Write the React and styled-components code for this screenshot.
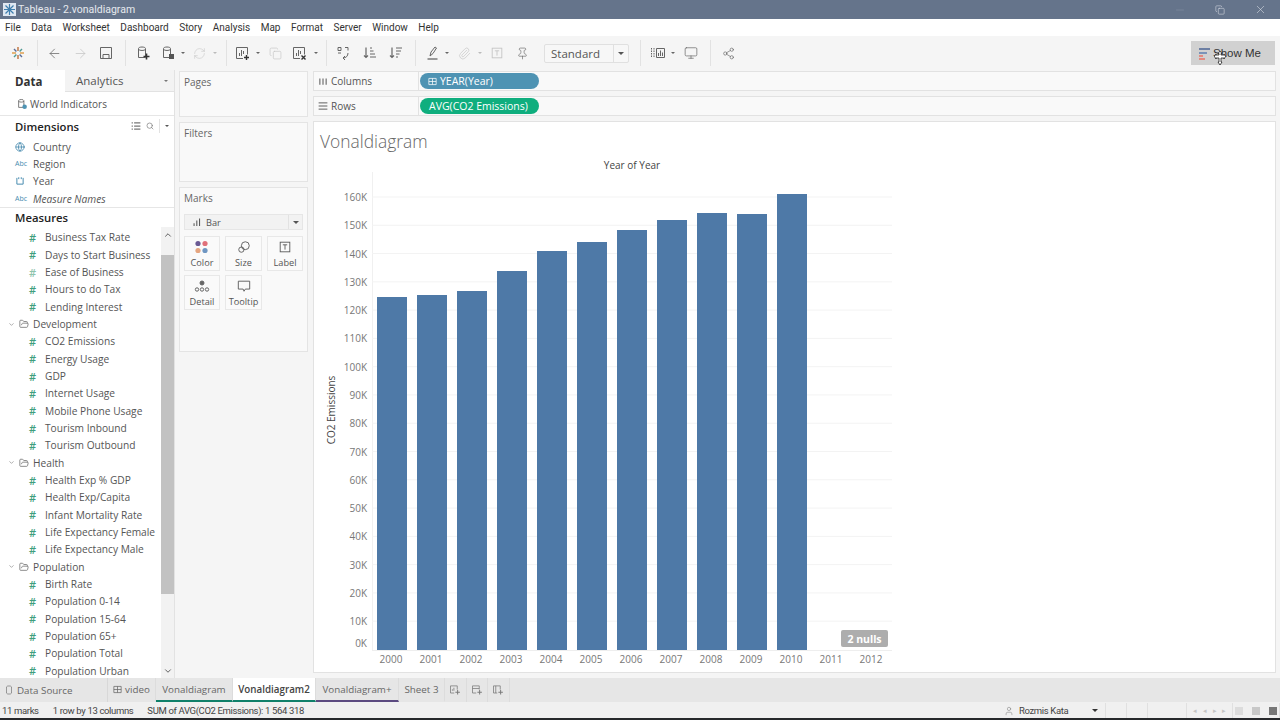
import React from "react";
import styled, { createGlobalStyle } from "styled-components";
import {
  ArrowLeft,
  ArrowRight,
  ChevronDown,
  ChevronUp,
  Copy,
  FolderOpen,
  Globe,
  Minus,
  Monitor,
  Paperclip,
  Pin,
  RefreshCw,
  Search,
  Share2,
  User,
  X,
} from "lucide-react";

const Global = createGlobalStyle`
  html, body { margin: 0; padding: 0; height: 100%; overflow: hidden; }
  body { font-family: "Open Sans", "Liberation Sans", sans-serif; color: #333; background: #f5f5f5; }
  * { box-sizing: border-box; }
`;

const Page = styled.div`
  width: 1280px;
  height: 720px;
  display: flex;
  flex-direction: column;
  overflow: hidden;
`;

/* window chrome */
const TitleBar = styled.div`
  height: 19px;
  flex: none;
  background: #65748b;
  color: #e6e9ee;
  display: flex;
  align-items: center;
  padding: 0 0 0 3px;
  font-family: Roboto, sans-serif;
  font-size: 10.5px;
`;

const TitleText = styled.span`
  margin-left: 2px;
`;

const WinButtons = styled.div`
  margin-left: auto;
  display: flex;
  align-items: center;
  color: #dfe3ea;
`;

const WinButton = styled.span`
  width: 40px;
  display: flex;
  justify-content: center;
  color: ${(p) => (p.$dim ? "#8b97aa" : "#e4e7ec")};
`;

const MenuBar = styled.div`
  height: 17px;
  flex: none;
  background: #fff;
  display: flex;
  align-items: center;
  padding-left: 5px;
  gap: 10.5px;
  font-family: Roboto, sans-serif;
  font-size: 10px;
  color: #333;
`;

/* toolbar */
const ToolBar = styled.div`
  height: 34px;
  flex: none;
  background: #f5f5f5;
  display: flex;
  align-items: center;
  padding-left: 5px;
`;

const Tool = styled.span`
  flex: none;
  width: ${(p) => p.$w || 18}px;
  margin-left: ${(p) => p.$ml || 0}px;
  display: flex;
  justify-content: center;
  align-items: center;
  color: ${(p) => (p.$faded ? "#c4c4c4" : "#666")};
`;

const ToolSep = styled.span`
  flex: none;
  width: 1px;
  height: ${(p) => p.$h || 26}px;
  background: #e2e2e2;
  margin-left: ${(p) => p.$ml ?? 6}px;
`;

const Caret = styled.span`
  width: 0;
  height: 0;
  border-left: ${(p) => p.$size || 2}px solid transparent;
  border-right: ${(p) => p.$size || 2}px solid transparent;
  border-top: ${(p) => p.$size || 2}px solid ${(p) => p.$color || "#666"};
`;

const SelectBox = styled.div`
  flex: none;
  width: 85px;
  height: 19px;
  margin-left: 13px;
  border: 1px solid #e0e0e0;
  border-radius: 2px;
  display: flex;
  align-items: center;
  font-size: 11.5px;
  color: #555;
  padding-left: 6px;
  background: #f7f7f7;
`;

const SelectArrow = styled.span`
  margin-left: auto;
  width: 15px;
  height: 100%;
  border-left: 1px solid #e0e0e0;
  display: flex;
  align-items: center;
  justify-content: center;
`;

const ShowMe = styled.div`
  position: relative;
  margin-left: auto;
  margin-right: 5px;
  width: 84px;
  height: 24px;
  background: #d1d1d1;
  display: flex;
  align-items: center;
  padding-left: 8px;
  gap: 3px;
  font-family: "Liberation Sans", sans-serif;
  font-size: 11.5px;
  color: #333;
`;

const Cursor = styled.svg`
  position: absolute;
  left: 23px;
  top: 9px;
`;

/* main area */
const Main = styled.div`
  flex: 1;
  min-height: 0;
  display: flex;
  background: #f5f5f5;
`;

const Sidebar = styled.div`
  width: 175px;
  flex: none;
  background: #fff;
  border-right: 1px solid #e2e2e2;
  display: flex;
  flex-direction: column;
`;

const SideTabs = styled.div`
  height: 22px;
  flex: none;
  display: flex;
  align-items: center;
  font-size: 11.5px;
`;

const DataTab = styled.div`
  width: 65px;
  height: 100%;
  padding-left: 15px;
  display: flex;
  align-items: center;
  font-weight: 700;
  color: #333;
`;

const AnalyticsTab = styled.div`
  flex: 1;
  height: 100%;
  background: #f3f3f3;
  border-bottom: 1px solid #e2e2e2;
  display: flex;
  align-items: center;
  padding-left: 11px;
  color: #555;
  justify-content: space-between;
  padding-right: 6px;
`;

const Source = styled.div`
  height: 24px;
  flex: none;
  display: flex;
  align-items: center;
  padding-left: 16px;
  gap: 2px;
  font-size: 10px;
  color: #555;
  border-bottom: 1px solid #e6e6e6;
`;

const SectionHead = styled.div`
  height: ${(p) => p.$h || 19}px;
  flex: none;
  display: flex;
  align-items: center;
  padding: 0 5px ${(p) => p.$pb || 0}px 15px;
  font-size: 11.3px;
  font-weight: 600;
  color: #222;
`;

const HeadTools = styled.span`
  margin-left: auto;
  display: flex;
  align-items: center;
  gap: 5px;
  color: #777;
`;

const DimList = styled.div`
  flex: none;
  border-bottom: 1px solid #e6e6e6;
`;

const FieldRow = styled.div`
  height: 17.33px;
  display: flex;
  align-items: center;
  font-size: 10.2px;
  color: #555;
  white-space: nowrap;
  font-style: ${(p) => (p.$italic ? "italic" : "normal")};
`;

const TypeMark = styled.span`
  flex: none;
  width: 33px;
  padding-left: 15px;
  display: flex;
  justify-content: flex-start;
  color: ${(p) => p.$color || "#4a8db0"};
  font-size: ${(p) => p.$size || 10}px;
  font-style: normal;
  line-height: 1;
`;

const MeasureWrap = styled.div`
  flex: 1;
  min-height: 0;
  display: flex;
`;

const MeasureList = styled.div`
  flex: 1;
  min-width: 0;
  overflow: hidden;
  padding-top: 1.5px;
`;

const MeasureRow = styled(FieldRow)`
  padding-left: ${(p) => (p.$group ? 33 : 45)}px;
  position: relative;
`;

const Hash = styled.span`
  position: absolute;
  left: 29px;
  color: ${(p) => (p.$faint ? "#8fc4ad" : "#3f9e7e")};
  font-size: 11px;
  font-weight: 600;
`;

const GroupIcons = styled.span`
  position: absolute;
  left: 8px;
  display: flex;
  align-items: center;
  gap: 4px;
  color: #777;
`;

const ScrollTrack = styled.div`
  width: 13px;
  flex: none;
  background: #f2f2f2;
  display: flex;
  flex-direction: column;
  align-items: center;
  color: #444;
  padding: 3px 0 2px;
`;

const ScrollThumb = styled.div`
  width: 13px;
  height: 339px;
  margin: 15px 0 auto;
  background: #c2c2c2;
`;

const CardsColumn = styled.div`
  width: 138px;
  flex: none;
  padding: 1px 5px 0 4px;
  display: flex;
  flex-direction: column;
  gap: 5px;
`;

const Card = styled.div`
  height: ${(p) => p.$h}px;
  background: #f9f9f9;
  border: 1px solid #e4e4e4;
  padding: 3px 4px;
`;

const CardTitle = styled.div`
  font-size: 10px;
  line-height: 15px;
  color: #666;
`;

const MarkSelect = styled.div`
  margin-top: 8px;
  height: 16px;
  background: #f2f2f2;
  border: 1px solid #e6e6e6;
  display: flex;
  align-items: center;
  padding-left: 7px;
  gap: 3px;
  font-size: 9.2px;
  color: #555;
`;

const MarkArrow = styled.span`
  margin-left: auto;
  width: 14px;
  height: 100%;
  border-left: 1px solid #e2e2e2;
  display: flex;
  align-items: center;
  justify-content: center;
`;

const MarkGrid = styled.div`
  margin-top: 6px;
  display: grid;
  grid-template-columns: 36px 37px 36px;
  grid-auto-rows: 35px;
  column-gap: 5px;
  row-gap: 4px;
`;

const MarkButton = styled.div`
  background: #fafafa;
  border: 1px solid #e8e8e8;
  display: flex;
  flex-direction: column;
  align-items: center;
  padding-top: 3px;
  font-size: 9.2px;
  color: #555;
  gap: 2px;
`;

const WorkArea = styled.div`
  flex: 1;
  min-width: 0;
  padding: 1px 4px 5px 0;
  display: flex;
  flex-direction: column;
  gap: 5px;
`;

const Shelf = styled.div`
  height: 20px;
  flex: none;
  background: #f9f9f9;
  border: 1px solid #e2e2e2;
  display: flex;
  align-items: center;
`;

const ShelfLabel = styled.div`
  width: 105px;
  height: 100%;
  flex: none;
  display: flex;
  align-items: center;
  padding-left: 4px;
  gap: 3px;
  font-size: 10px;
  color: #555;
  border-right: 1px solid #e2e2e2;
`;

const Pill = styled.div`
  width: 119px;
  height: 16px;
  margin-left: 1px;
  border-radius: 8px;
  background: ${(p) => p.$bg};
  color: #fff;
  font-size: 10.5px;
  display: flex;
  align-items: center;
  padding-left: ${(p) => p.$pad}px;
  gap: 3px;
`;

const View = styled.div`
  flex: 1;
  min-height: 0;
  background: #fff;
  border: 1px solid #e2e2e2;
  padding-left: 6px;
`;

const ViewTitle = styled.div`
  height: 33px;
  display: flex;
  align-items: center;
  font-size: 17.4px;
  font-weight: 300;
  color: #666;
  padding-top: 4px;
`;

const ChartSvg = styled.svg`
  display: block;
  font-family: "Open Sans", "Liberation Sans", sans-serif;
`;

/* bottom strips */
const TabBar = styled.div`
  height: 24px;
  flex: none;
  background: #e6e6e6;
  display: flex;
  align-items: stretch;
  font-size: 9.8px;
  color: #666;
`;

const SourceTab = styled.div`
  width: 108px;
  display: flex;
  align-items: center;
  padding-left: 4px;
  gap: 3px;
  border-right: 1px solid #d8d8d8;
`;

const SheetTab = styled.div`
  width: ${(p) => p.$w}px;
  flex: none;
  display: flex;
  align-items: center;
  justify-content: center;
  gap: 3px;
  background: ${(p) => (p.$active ? "#fff" : "transparent")};
  color: ${(p) => (p.$active ? "#444" : "#666")};
  font-weight: ${(p) => (p.$active ? 600 : 400)};
  border-bottom: 2px solid ${(p) => p.$line || "transparent"};
  border-right: 1px solid #dcdcdc;
`;

const NewSheet = styled.span`
  width: 21.5px;
  flex: none;
  display: flex;
  align-items: center;
  justify-content: center;
  border-right: 1px solid #dcdcdc;
  color: #777;
`;

const StatusBar = styled.div`
  height: 16px;
  flex: none;
  background: #f0f0f0;
  display: flex;
  align-items: center;
  font-family: Roboto, sans-serif;
  font-size: 9.5px;
  letter-spacing: -0.35px;
  color: #444;
  padding: 1px 0 0 2px;
`;

const StatusText = styled.span`
  margin-right: ${(p) => p.$mr}px;
  white-space: nowrap;
`;

const UserBox = styled.div`
  margin-left: auto;
  width: 105px;
  height: 100%;
  display: flex;
  align-items: center;
  padding: 0 7px 0 3px;
  gap: 5px;
  color: #444;
  border-right: 1px solid #e0e0e0;
`;

const UserCaret = styled(Caret)`
  margin-left: auto;
`;

const StatusCell = styled.span`
  width: ${(p) => p.$w}px;
  height: 100%;
  flex: none;
  border-right: 1px solid #e0e0e0;
  display: flex;
  align-items: center;
  justify-content: center;
  gap: ${(p) => p.$gap || 0}px;
  color: #c4c4c4;
  font-size: 7px;
`;

const ViewMode = styled.span`
  width: ${(p) => p.$s}px;
  height: ${(p) => p.$s}px;
  background: ${(p) => p.$bg};
  flex: none;
`;

const BottomEdge = styled.div`
  height: 2px;
  flex: none;
  background: #26282b;
`;

/* small drawn icons */
const Svg = ({ s = 16, children, ...rest }) => (
  <svg width={s} height={s} viewBox="0 0 16 16" fill="none" stroke="currentColor" strokeWidth="1" {...rest}>
    {children}
  </svg>
);

const AppLogo = () => (
  <svg width="13" height="13" viewBox="0 0 13 13">
    <rect width="13" height="13" fill="#dfe8f2" />
    <path d="M6.5 1v11M1 6.5h11M2.5 2.5l8 8M10.5 2.5l-8 8" stroke="#3f7fae" strokeWidth="1.2" />
  </svg>
);

const SparkLogo = () => (
  <svg width="14" height="14" viewBox="0 0 14 14" strokeWidth="1.4">
    <path d="M7 1v4M7 9v4" stroke="#c0723c" />
    <path d="M1 7h4M9 7h4" stroke="#e0a04f" />
    <path d="M3 3l2.4 2.4M8.6 8.6L11 11" stroke="#5b6f9a" />
    <path d="M11 3L8.6 5.4M5.4 8.6L3 11" stroke="#4f9a93" />
  </svg>
);

const SaveIcon = () => (
  <Svg>
    <path d="M2.5 2.5h11v11h-11z" />
    <path d="M5 13.5v-4h6v4" />
  </Svg>
);

const DbIcon = ({ badge, s }) => (
  <Svg s={s}>
    <path d="M3.5 3.5c0-2 7-2 7 0v9h-7z" />
    <path d="M3.5 4.5c1.5 1.3 5.5 1.3 7 0" />
    {badge === "plus" && <path d="M11.5 8.5v6M8.5 11.5h6" stroke="#333" strokeWidth="1.6" />}
    {badge === "stop" && <rect x="9" y="9" width="5" height="5" fill="#555" stroke="none" />}
    {badge === "link" && <circle cx="11.5" cy="11.5" r="3" fill="#4e93b3" stroke="none" />}
  </Svg>
);

const SheetIcon = ({ badge }) => (
  <Svg>
    <path d="M2.5 2.5h11v7M9 13.5H2.5v-11" />
    <path d="M5.5 11V8M7.5 11V5M9.5 9V6" />
    {badge === "plus" && <path d="M12.5 10v5M10 12.5h5" stroke="#333" strokeWidth="1.4" />}
    {badge === "x" && <path d="M10.5 10.5l4 4M14.5 10.5l-4 4" stroke="#333" strokeWidth="1.4" />}
  </Svg>
);

const SwapIcon = () => (
  <Svg>
    <path d="M3 2.5h3v3H3zM3 8h3M10 2.5h3v3M13 8c0 3-2 5-5 5l2-2M8 13l2 2" />
  </Svg>
);

const SortIcon = ({ down }) => (
  <Svg>
    <path d="M4 2.5v10M2 10.5l2 2 2-2" strokeWidth="1.2" />
    {down ? (
      <path d="M8 3h6M8 6h5M8 9h3.5M8 12h2" />
    ) : (
      <path d="M8 3h2M8 6h3.5M8 9h5M8 12h6" />
    )}
  </Svg>
);

const HighlightIcon = () => (
  <Svg>
    <path d="M5 11l1-4 4-5 1.5 1-3.5 5.5z" />
    <path d="M2.5 14h10" strokeWidth="1.3" />
  </Svg>
);

const TextBox = ({ s = 14 }) => (
  <Svg s={s}>
    <rect x="2.5" y="2.5" width="11" height="11" />
    <path d="M5.5 5.5h5M8 5.5V11" />
  </Svg>
);

const CardsIcon = () => (
  <Svg>
    <path d="M1.5 3v10M4 3v10" strokeDasharray="1.5 1" />
    <path d="M6.5 3.5h8v9h-8z" />
    <path d="M8.5 11V8M10.5 11V5.5M12.5 11V7.5" />
  </Svg>
);

const ShowMeIcon = () => (
  <svg width="11" height="13" viewBox="0 0 11 13">
    <rect x="0" y="1" width="11" height="2" fill="#6d7fa3" />
    <rect x="0" y="5" width="8" height="2" fill="#7a93b8" />
    <rect x="0" y="8" width="4" height="2" fill="#e28a80" />
    <rect x="0" y="11" width="6" height="2" fill="#e28a80" />
  </svg>
);

const CalendarIcon = () => (
  <Svg s={10} strokeWidth="1.6">
    <path d="M3 3v10h10V3M6 5V2M10 5V2" />
  </Svg>
);

const BarMark = () => (
  <Svg s={11}>
    <path d="M3 13V9M7 13V5M11 13V2" strokeWidth="1.5" />
  </Svg>
);

const ColorDots = () => (
  <svg width="16" height="14" viewBox="0 0 16 14">
    <circle cx="4" cy="3.5" r="2.6" fill="#6a5a94" />
    <circle cx="11" cy="3.5" r="2.6" fill="#e0707a" />
    <circle cx="4" cy="10.5" r="2.6" fill="#e5a57f" />
    <circle cx="11" cy="10.5" r="2.6" fill="#6f96c2" />
  </svg>
);

const SizeIcon = () => (
  <Svg s={14}>
    <circle cx="9.5" cy="6.5" r="4.5" />
    <circle cx="5" cy="11" r="3" />
  </Svg>
);

const DetailIcon = () => (
  <svg width="16" height="14" viewBox="0 0 16 14" fill="none" stroke="#666">
    <circle cx="8" cy="4" r="2" fill="#666" />
    <circle cx="3" cy="10.5" r="1.7" />
    <circle cx="8" cy="10.5" r="1.7" />
    <circle cx="13" cy="10.5" r="1.7" />
  </svg>
);

const TooltipIcon = () => (
  <Svg s={14}>
    <path d="M1.5 2.5h13v9H9.5L8 14l-1-2.5H1.5z" />
  </Svg>
);

const GridIcon = () => (
  <Svg s={9}>
    <path d="M1.5 2.5h13v11h-13zM8 2.5v11M1.5 8h13" strokeWidth="1.3" />
  </Svg>
);

const NewTabIcon = ({ kind }) => (
  <Svg s={12}>
    <path d="M2 2.5h9v5M7 12H2V2.5" />
    {kind === "sheet" && <path d="M4.5 9V7M6.5 9V5" />}
    {kind === "dash" && <path d="M2 6h9" />}
    {kind === "story" && <path d="M5 2.5V12" />}
    <path d="M11.5 8v6M8.5 11h6" strokeWidth="1.3" />
  </Svg>
);

const menus = ["File", "Data", "Worksheet", "Dashboard", "Story", "Analysis", "Map", "Format", "Server", "Window", "Help"];

const measures = [
  { name: "Business Tax Rate" },
  { name: "Days to Start Business" },
  { name: "Ease of Business", faint: true },
  { name: "Hours to do Tax" },
  { name: "Lending Interest" },
  { name: "Development", group: true },
  { name: "CO2 Emissions" },
  { name: "Energy Usage" },
  { name: "GDP" },
  { name: "Internet Usage" },
  { name: "Mobile Phone Usage" },
  { name: "Tourism Inbound" },
  { name: "Tourism Outbound" },
  { name: "Health", group: true },
  { name: "Health Exp % GDP" },
  { name: "Health Exp/Capita" },
  { name: "Infant Mortality Rate" },
  { name: "Life Expectancy Female" },
  { name: "Life Expectancy Male" },
  { name: "Population", group: true },
  { name: "Birth Rate" },
  { name: "Population 0-14" },
  { name: "Population 15-64" },
  { name: "Population 65+" },
  { name: "Population Total" },
  { name: "Population Urban" },
];

// chart values as pixel tops of each bar, baseline at 650
const bars = [
  [2000, 297],
  [2001, 295],
  [2002, 291],
  [2003, 271],
  [2004, 251],
  [2005, 242],
  [2006, 230],
  [2007, 220],
  [2008, 213],
  [2009, 214],
  [2010, 194],
  [2011, 650],
  [2012, 650],
];

const ticks = Array.from({ length: 16 }, (_, i) => 160 - i * 10);

const Chart = () => (
  <ChartSvg width="580" height="518" viewBox="320 155 580 518">
    <text x="632" y="169" textAnchor="middle" fontSize="10" fill="#444">
      Year of Year
    </text>
    <text x="0" y="0" transform="translate(335 410) rotate(-90)" textAnchor="middle" fontSize="10" fill="#444">
      CO2 Emissions
    </text>
    <line x1="372.5" y1="172" x2="372.5" y2="650" stroke="#f0f0f0" />
    <line x1="372" y1="650.5" x2="892" y2="650.5" stroke="#eee" />
    {ticks.map((t) => {
      const y = 197 + (160 - t) * 2.828;
      return (
        <g key={t}>
          <line x1="372" y1={y} x2="892" y2={y} stroke="#f3f3f3" />
          <text x="367" y={y + 4} textAnchor="end" fontSize="10" fill="#777">
            {t}K
          </text>
        </g>
      );
    })}
    <text x="367" y="647" textAnchor="end" fontSize="10" fill="#777">
      0K
    </text>
    {bars.map(([year, top], i) => (
      <g key={year}>
        <rect x={377 + i * 40} y={top} width="30" height={650 - top} fill="#4e79a7" />
        <text x={391 + i * 40} y="663" textAnchor="middle" fontSize="10" fill="#777">
          {year}
        </text>
      </g>
    ))}
    <rect x="841" y="630" width="47" height="17" rx="2" fill="#adadad" />
    <text x="864.5" y="642.5" textAnchor="middle" fontSize="10.5" fontWeight="700" fill="#fff">
      2 nulls
    </text>
  </ChartSvg>
);

const App = () => (
  <Page>
    <Global />
    <TitleBar>
      <AppLogo />
      <TitleText>Tableau - 2.vonaldiagram</TitleText>
      <WinButtons>
        <WinButton $dim>
          <Minus size={12} strokeWidth={1} />
        </WinButton>
        <WinButton>
          <Copy size={10} strokeWidth={1.2} />
        </WinButton>
        <WinButton>
          <X size={13} strokeWidth={1} />
        </WinButton>
      </WinButtons>
    </TitleBar>

    <MenuBar>
      {menus.map((m) => (
        <span key={m}>{m}</span>
      ))}
    </MenuBar>

    <ToolBar>
      <Tool $w={26}>
        <SparkLogo />
      </Tool>
      <ToolSep />
      <Tool $w={22} $ml={5}>
        <ArrowLeft size={15} strokeWidth={1.2} />
      </Tool>
      <Tool $w={22} $ml={4} $faded>
        <ArrowRight size={15} strokeWidth={1.2} />
      </Tool>
      <Tool $w={22} $ml={4}>
        <SaveIcon />
      </Tool>
      <ToolSep $ml={8} />
      <Tool $ml={8}>
        <DbIcon badge="plus" />
      </Tool>
      <Tool $ml={7}>
        <DbIcon badge="stop" />
      </Tool>
      <Tool $w={8} $ml={2}>
        <Caret />
      </Tool>
      <Tool $w={16} $ml={4} $faded>
        <RefreshCw size={13} strokeWidth={1} />
      </Tool>
      <Tool $w={8} $ml={4} $faded>
        <Caret $color="#bbb" />
      </Tool>
      <ToolSep $ml={7} />
      <Tool $ml={6}>
        <SheetIcon badge="plus" />
      </Tool>
      <Tool $w={8} $ml={3}>
        <Caret />
      </Tool>
      <Tool $ml={4} $faded>
        <Copy size={13} strokeWidth={1.2} />
      </Tool>
      <Tool $ml={6}>
        <SheetIcon badge="x" />
      </Tool>
      <Tool $w={8} $ml={4}>
        <Caret />
      </Tool>
      <ToolSep $ml={6} />
      <Tool $ml={7}>
        <SwapIcon />
      </Tool>
      <Tool $ml={9}>
        <SortIcon />
      </Tool>
      <Tool $ml={8}>
        <SortIcon down />
      </Tool>
      <ToolSep $ml={10} />
      <Tool $ml={8}>
        <HighlightIcon />
      </Tool>
      <Tool $w={8} $ml={1}>
        <Caret />
      </Tool>
      <Tool $ml={4} $faded>
        <Paperclip size={13} strokeWidth={1.2} />
      </Tool>
      <Tool $w={8} $ml={3} $faded>
        <Caret $color="#bbb" />
      </Tool>
      <Tool $ml={4} $faded>
        <TextBox />
      </Tool>
      <Tool $ml={7}>
        <Pin size={13} strokeWidth={1.2} />
      </Tool>
      <SelectBox>
        Standard
        <SelectArrow>
          <Caret $size={3} $color="#555" />
        </SelectArrow>
      </SelectBox>
      <ToolSep $ml={11} />
      <Tool $ml={8}>
        <CardsIcon />
      </Tool>
      <Tool $w={8} $ml={2}>
        <Caret />
      </Tool>
      <Tool $ml={5}>
        <Monitor size={14} strokeWidth={1.2} />
      </Tool>
      <ToolSep $ml={10} />
      <Tool $ml={8}>
        <Share2 size={13} strokeWidth={1.2} />
      </Tool>
      <ShowMe>
        <ShowMeIcon />
        Show Me
        <Cursor width="12" height="16" viewBox="0 0 12 16" fill="#fff" stroke="#222" strokeWidth="0.8">
          <path d="M6 1l2 2.5H7V5h3V4l1.5 2.5L10 9V8H7v4h1l-2 3-2-3h1V8H2v1L.5 6.5 2 4v1h3V3.5H4z" />
        </Cursor>
      </ShowMe>
    </ToolBar>

    <Main>
      <Sidebar>
        <SideTabs>
          <DataTab>Data</DataTab>
          <AnalyticsTab>
            Analytics
            <Caret $size={2} $color="#777" />
          </AnalyticsTab>
        </SideTabs>
        <Source>
          <DbIcon s={12} badge="link" />
          World Indicators
        </Source>
        <SectionHead $h={22} $pb={2}>
          Dimensions
          <HeadTools>
            <Svg s={10}>
              <path d="M1 3h2M5 3h10M1 8h2M5 8h10M1 13h2M5 13h10" strokeWidth="2" />
            </Svg>
            <Search size={8} />
            <ToolSep $h={14} $ml={0} />
            <Caret $color="#555" />
          </HeadTools>
        </SectionHead>
        <DimList>
          <FieldRow>
            <TypeMark>
              <Globe size={10} />
            </TypeMark>
            Country
          </FieldRow>
          <FieldRow>
            <TypeMark $size={7}>Abc</TypeMark>
            Region
          </FieldRow>
          <FieldRow>
            <TypeMark>
              <CalendarIcon />
            </TypeMark>
            Year
          </FieldRow>
          <FieldRow $italic>
            <TypeMark $size={7}>Abc</TypeMark>
            Measure Names
          </FieldRow>
        </DimList>
        <SectionHead>Measures</SectionHead>
        <MeasureWrap>
          <MeasureList>
            {measures.map((f) => (
              <MeasureRow key={f.name} $group={f.group}>
                {f.group ? (
                  <GroupIcons>
                    <ChevronDown size={7} />
                    <FolderOpen size={10} />
                  </GroupIcons>
                ) : (
                  <Hash $faint={f.faint}>#</Hash>
                )}
                {f.name}
              </MeasureRow>
            ))}
          </MeasureList>
          <ScrollTrack>
            <ChevronUp size={10} strokeWidth={2} />
            <ScrollThumb />
            <ChevronDown size={10} strokeWidth={2} />
          </ScrollTrack>
        </MeasureWrap>
      </Sidebar>

      <CardsColumn>
        <Card $h={46}>
          <CardTitle>Pages</CardTitle>
        </Card>
        <Card $h={60}>
          <CardTitle>Filters</CardTitle>
        </Card>
        <Card $h={165}>
          <CardTitle>Marks</CardTitle>
          <MarkSelect>
            <BarMark />
            Bar
            <MarkArrow>
              <Caret $size={3} $color="#555" />
            </MarkArrow>
          </MarkSelect>
          <MarkGrid>
            <MarkButton>
              <ColorDots />
              Color
            </MarkButton>
            <MarkButton>
              <SizeIcon />
              Size
            </MarkButton>
            <MarkButton>
              <TextBox />
              Label
            </MarkButton>
            <MarkButton>
              <DetailIcon />
              Detail
            </MarkButton>
            <MarkButton>
              <TooltipIcon />
              Tooltip
            </MarkButton>
          </MarkGrid>
        </Card>
      </CardsColumn>

      <WorkArea>
        <Shelf>
          <ShelfLabel>
            <Svg s={10}>
              <path d="M3 4v10M8 4v10M13 4v10" strokeWidth="1.6" />
            </Svg>
            Columns
          </ShelfLabel>
          <Pill $bg="#4e93b3" $pad={8}>
            <GridIcon />
            YEAR(Year)
          </Pill>
        </Shelf>
        <Shelf>
          <ShelfLabel>
            <Svg s={10}>
              <path d="M1 3h14M1 8h14M1 13h14" strokeWidth="1.5" />
            </Svg>
            Rows
          </ShelfLabel>
          <Pill $bg="#0fae7e" $pad={9}>
            AVG(CO2 Emissions)
          </Pill>
        </Shelf>
        <View>
          <ViewTitle>Vonaldiagram</ViewTitle>
          <Chart />
        </View>
      </WorkArea>
    </Main>

    <TabBar>
      <SourceTab>
        <Svg s={10}>
          <path d="M4 3c0-2 8-2 8 0v10c0 2-8 2-8 0z" />
        </Svg>
        Data Source
      </SourceTab>
      <SheetTab $w={48}>
        <GridIcon />
        video
      </SheetTab>
      <SheetTab $w={77} $line="#10806a">
        Vonaldiagram
      </SheetTab>
      <SheetTab $w={83} $active $line="#10806a">
        Vonaldiagram2
      </SheetTab>
      <SheetTab $w={83} $line="#5b4a80">
        Vonaldiagram+
      </SheetTab>
      <SheetTab $w={46}>Sheet 3</SheetTab>
      <NewSheet>
        <NewTabIcon kind="sheet" />
      </NewSheet>
      <NewSheet>
        <NewTabIcon kind="dash" />
      </NewSheet>
      <NewSheet>
        <NewTabIcon kind="story" />
      </NewSheet>
    </TabBar>

    <StatusBar>
      <StatusText $mr={14}>11 marks</StatusText>
      <StatusText $mr={14}>1 row by 13 columns</StatusText>
      <StatusText $mr={0}>SUM of AVG(CO2 Emissions): 1 564 318</StatusText>
      <UserBox>
        <User size={10} strokeWidth={1.2} color="#777" />
        Rozmis Kata
        <UserCaret $size={3} $color="#333" />
      </UserBox>
      <StatusCell $w={21} />
      <StatusCell $w={21} />
      <StatusCell $w={39} />
      <StatusCell $w={46} $gap={6}>
        <span>◂</span>
        <span>◂</span>
        <span>▸</span>
        <span>▸</span>
      </StatusCell>
      <StatusCell $w={47} $gap={9}>
        <ViewMode $s={8} $bg="#dcdcdc" />
        <ViewMode $s={8} $bg="#c8c8c8" />
        <ViewMode $s={8} $bg="#777" />
      </StatusCell>
    </StatusBar>
    <BottomEdge />
  </Page>
);

export default App;
